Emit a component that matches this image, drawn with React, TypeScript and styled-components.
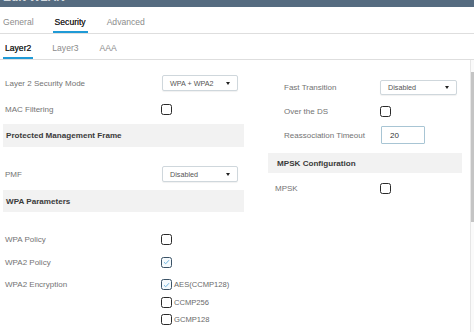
import React from 'react';
import styled, {createGlobalStyle} from 'styled-components';

const GlobalStyle = createGlobalStyle`
    html, body {
        margin: 0;
        padding: 0;
        background: #ffffff;
        overflow: hidden;
    }
    body {
        font-family: "Liberation Sans", Arial, sans-serif;
    }
`;

const Page = styled.div`
    width: 474px;
    height: 332px;
    display: flex;
    flex-direction: column;
    overflow: hidden;
    background: #fff;
`;

const Header = styled.header`
    height: 7px;
    flex-shrink: 0;
    background: #556b80;
    overflow: hidden;
`;
const HeaderTitle = styled.div`
    margin-top: -9px;
    padding-left: 3px;
    font-size: 12px;
    line-height: 12px;
    font-weight: bold;
    color: rgba(255, 255, 255, 0.75);
`;

const TabBar = styled.nav<{$h: number; $pl: number}>`
    display: flex;
    gap: 17px;
    height: ${p => p.$h}px;
    padding-left: ${p => p.$pl}px;
    border-bottom: 1px solid #dedede;
    flex-shrink: 0;
`;
const Tab = styled.div<{$active?: boolean; $pt: number}>`
    display: flex;
    align-items: center;
    box-sizing: border-box;
    padding: ${p => p.$pt}px 2px 0;
    font-size: 8.6px;
    color: ${p => (p.$active ? '#2b2b2b' : '#8c8c8c')};
    border-bottom: 2px solid ${p => (p.$active ? '#1f9ad6' : 'transparent')};
    text-shadow: ${p => (p.$active ? '0 0 0.3px #2b2b2b' : 'none')};
`;

const Body = styled.div`
    flex: 1;
    display: flex;
    min-height: 0;
`;
const Main = styled.div`
    flex: 1;
    display: grid;
    grid-template-columns: 241px 194px;
    column-gap: 24px;
    align-items: start;
    padding-left: 3px;
`;
const ScrollRail = styled.div`
    width: 3px;
    border-left: 1px solid #e6e6e6;
    background: #fafafa;
`;
const ScrollThumb = styled.div`
    margin-top: 12px;
    height: 150px;
    background: #c4c4c4;
`;

const Column = styled.section`
    display: flex;
    flex-direction: column;
`;

const Row = styled.div<{$h?: number; $mt?: number; $top?: boolean}>`
    display: flex;
    align-items: ${p => (p.$top ? 'flex-start' : 'center')};
    height: ${p => (p.$h ? `${p.$h}px` : 'auto')};
    margin-top: ${p => p.$mt || 0}px;
`;
const Label = styled.span<{$w: number; $pl: number; $lh?: number}>`
    box-sizing: border-box;
    width: ${p => p.$w}px;
    padding-left: ${p => p.$pl}px;
    flex-shrink: 0;
    font-size: 8px;
    line-height: ${p => (p.$lh ? `${p.$lh}px` : 'normal')};
    color: #737373;
`;

const Band = styled.div<{$h: number; $mt?: number; $pl: number}>`
    display: flex;
    align-items: center;
    height: ${p => p.$h}px;
    margin-top: ${p => p.$mt || 0}px;
    padding-left: ${p => p.$pl}px;
    background: #f2f2f2;
    font-size: 8.1px;
    font-weight: bold;
    color: #3a3a3a;
`;

const SelectBox = styled.div<{$w: number; $h: number; $ml?: number}>`
    position: relative;
    box-sizing: border-box;
    width: ${p => p.$w}px;
    height: ${p => p.$h}px;
    margin-left: ${p => p.$ml || 0}px;
    display: flex;
    align-items: center;
    padding-left: 7px;
    border: 1px solid #cfd7dc;
    border-radius: 2px;
    box-shadow: 0 1px 1px rgba(0, 0, 0, 0.06);
    font-size: 7.2px;
    color: #555;
    background: #fff;
`;
const Caret = styled.span`
    position: absolute;
    right: 7px;
    top: 50%;
    margin-top: -1px;
    border-left: 2px solid transparent;
    border-right: 2px solid transparent;
    border-top: 3px solid #222;
`;

const TextInput = styled.div`
    box-sizing: border-box;
    width: 44px;
    height: 18px;
    margin-left: 1px;
    display: flex;
    align-items: center;
    padding-left: 8px;
    border: 1px solid #a8c5d4;
    border-radius: 1px;
    font-size: 8px;
    color: #333;
`;

const Box = styled.span<{$checked?: boolean}>`
    box-sizing: border-box;
    width: 11px;
    height: 11px;
    flex-shrink: 0;
    display: inline-flex;
    align-items: center;
    justify-content: center;
    border: 1.5px solid ${p => (p.$checked ? '#3a5266' : '#2a2a2a')};
    border-radius: 2.5px;
    background: ${p => (p.$checked ? '#f5fafd' : '#fff')};
`;

const OptionList = styled.div`
    display: flex;
    flex-direction: column;
`;
const Option = styled.div`
    display: flex;
    align-items: center;
    gap: 2px;
    height: 17.5px;
    font-size: 7.6px;
    color: #6a6a6a;
`;

function Checkbox({checked}: {checked?: boolean}) {
    return (
        <Box $checked={checked}>
            {checked && (
                <svg width="7" height="6" viewBox="0 0 7 6">
                    <polyline points="1,3.2 2.7,4.8 6,1.2" fill="none" stroke="#6cb3de" strokeWidth="1"/>
                </svg>
            )}
        </Box>
    );
}

function Select({value, w, h, ml}: {value: string; w: number; h: number; ml?: number}) {
    return (
        <SelectBox $w={w} $h={h} $ml={ml}>
            {value}
            <Caret/>
        </SelectBox>
    );
}

export default function App() {
    return (
        <Page>
            <GlobalStyle/>
            <Header>
                <HeaderTitle>Edit WLAN</HeaderTitle>
            </Header>
            <TabBar $h={26} $pl={1}>
                <Tab $pt={6}>General</Tab>
                <Tab $pt={6} $active>Security</Tab>
                <Tab $pt={6}>Advanced</Tab>
            </TabBar>
            <TabBar $h={25} $pl={3}>
                <Tab $pt={5} $active>Layer2</Tab>
                <Tab $pt={5}>Layer3</Tab>
                <Tab $pt={5}>AAA</Tab>
            </TabBar>
            <Body>
                <Main>
                    <Column>
                        <Row $h={24} $mt={11}>
                            <Label $w={158} $pl={2}>Layer 2 Security Mode</Label>
                            <Select value="WPA + WPA2" w={76} h={16} ml={1}/>
                        </Row>
                        <Row $h={28}>
                            <Label $w={158} $pl={2}>MAC Filtering</Label>
                            <Checkbox/>
                        </Row>
                        <Band $h={23} $mt={1} $pl={3}>Protected Management Frame</Band>
                        <Row $h={24} $mt={15}>
                            <Label $w={158} $pl={2}>PMF</Label>
                            <Select value="Disabled" w={76} h={16} ml={1}/>
                        </Row>
                        <Band $h={22} $mt={4} $pl={3}>WPA Parameters</Band>
                        <Row $h={24} $mt={15}>
                            <Label $w={158} $pl={2}>WPA Policy</Label>
                            <Checkbox/>
                        </Row>
                        <Row $h={22}>
                            <Label $w={158} $pl={2}>WPA2 Policy</Label>
                            <Checkbox checked/>
                        </Row>
                        <Row $mt={3} $top>
                            <Label $w={158} $pl={2} $lh={17}>WPA2 Encryption</Label>
                            <OptionList>
                                <Option><Checkbox checked/>AES(CCMP128)</Option>
                                <Option><Checkbox/>CCMP256</Option>
                                <Option><Checkbox/>GCMP128</Option>
                            </OptionList>
                        </Row>
                    </Column>
                    <Column>
                        <Row $h={24} $mt={15}>
                            <Label $w={112} $pl={16}>Fast Transition</Label>
                            <Select value="Disabled" w={77} h={15}/>
                        </Row>
                        <Row $h={24}>
                            <Label $w={112} $pl={16}>Over the DS</Label>
                            <Checkbox/>
                        </Row>
                        <Row $h={24}>
                            <Label $w={112} $pl={16}>Reassociation Timeout</Label>
                            <TextInput>20</TextInput>
                        </Row>
                        <Band $h={20} $mt={6} $pl={9}>MPSK Configuration</Band>
                        <Row $h={24} $mt={3}>
                            <Label $w={112} $pl={7}>MPSK</Label>
                            <Checkbox/>
                        </Row>
                    </Column>
                </Main>
                <ScrollRail>
                    <ScrollThumb/>
                </ScrollRail>
            </Body>
        </Page>
    );
}
